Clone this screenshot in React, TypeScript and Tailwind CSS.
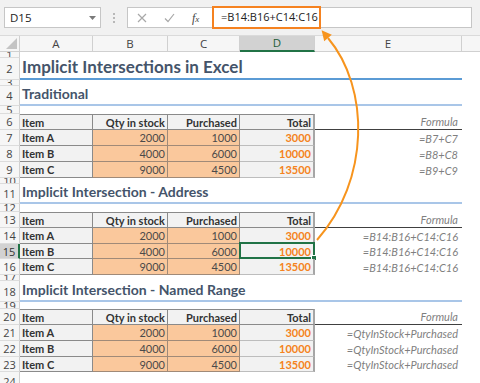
import React from 'react';

const cellFont = "font-['Lato','Liberation_Sans',sans-serif]";
const uiFont = "font-['Open_Sans','Noto_Sans',sans-serif]";

type DataRow = {
  n: number;
  h: string;
  item: string;
  qty: string;
  purchased: string;
  total: string;
  formula: string;
  selected?: boolean;
};

type Section = {
  heading: { n: number; h: string; text: string };
  spacer: { n: number; h: string };
  header: { n: number; h: string };
  rows: DataRow[];
};

const RowHead: React.FC<{ n: number; h: string; active?: boolean }> = ({ n, h, active }) => (
  <div
    className={`${h} w-[20px] shrink-0 flex items-center justify-center overflow-hidden leading-none text-[11px] ${uiFont} border-b border-b-[#dcdcdc] ${
      active
        ? 'border-r-2 border-r-[#217346] bg-[#d2d2d2] text-[#333]'
        : 'border-r border-r-[#d0d0d0] bg-[#f6f6f6] text-[#444]'
    }`}
  >
    {n}
  </div>
);

const Blank: React.FC<{ n: number; h: string }> = ({ n, h }) => (
  <div className="flex">
    <RowHead n={n} h={h} />
    <div className="flex-1" />
  </div>
);

const sections: Section[] = [
  {
    heading: { n: 4, h: 'h-[20px]', text: 'Traditional' },
    spacer: { n: 5, h: 'h-[8px]' },
    header: { n: 6, h: 'h-[16px]' },
    rows: [
      { n: 7, h: 'h-[16px]', item: 'Item A', qty: '2000', purchased: '1000', total: '3000', formula: '=B7+C7' },
      { n: 8, h: 'h-[16px]', item: 'Item B', qty: '4000', purchased: '6000', total: '10000', formula: '=B8+C8' },
      { n: 9, h: 'h-[16px]', item: 'Item C', qty: '9000', purchased: '4500', total: '13500', formula: '=B9+C9' },
    ],
  },
  {
    heading: { n: 11, h: 'h-[20px]', text: 'Implicit Intersection - Address' },
    spacer: { n: 12, h: 'h-[8px]' },
    header: { n: 13, h: 'h-[16px]' },
    rows: [
      { n: 14, h: 'h-[16px]', item: 'Item A', qty: '2000', purchased: '1000', total: '3000', formula: '=B14:B16+C14:C16' },
      { n: 15, h: 'h-[15px]', item: 'Item B', qty: '4000', purchased: '6000', total: '10000', formula: '=B14:B16+C14:C16', selected: true },
      { n: 16, h: 'h-[16px]', item: 'Item C', qty: '9000', purchased: '4500', total: '13500', formula: '=B14:B16+C14:C16' },
    ],
  },
  {
    heading: { n: 18, h: 'h-[21px]', text: 'Implicit Intersection - Named Range' },
    spacer: { n: 19, h: 'h-[7px]' },
    header: { n: 20, h: 'h-[16px]' },
    rows: [
      { n: 21, h: 'h-[16px]', item: 'Item A', qty: '2000', purchased: '1000', total: '3000', formula: '=QtyInStock+Purchased' },
      { n: 22, h: 'h-[16px]', item: 'Item B', qty: '4000', purchased: '6000', total: '10000', formula: '=QtyInStock+Purchased' },
      { n: 23, h: 'h-[15px]', item: 'Item C', qty: '9000', purchased: '4500', total: '13500', formula: '=QtyInStock+Purchased' },
    ],
  },
];

const TableSection: React.FC<{ s: Section }> = ({ s }) => (
  <>
    <div className="flex">
      <RowHead n={s.heading.n} h={s.heading.h} />
      <div
        className={`${s.heading.h} w-[442px] flex items-end pl-[2px] pb-[3px] border-b-2 border-b-[#a9c6e8] text-[14px] font-bold leading-none text-[#44546a] whitespace-nowrap ${cellFont}`}
      >
        {s.heading.text}
      </div>
    </div>
    <Blank n={s.spacer.n} h={s.spacer.h} />
    {/* table header */}
    <div className={`flex text-[11px] leading-none ${cellFont}`}>
      <RowHead n={s.header.n} h={s.header.h} />
      <div className={`${s.header.h} w-[73px] flex items-center pl-[2px] bg-[#f2f2f2] border-t border-b border-r border-[#8a8a8a] font-bold text-[#333]`}>
        Item
      </div>
      <div className={`${s.header.h} w-[75px] flex items-center justify-end pr-[2px] bg-[#f2f2f2] border-t border-b border-r border-[#8a8a8a] font-bold text-[#333]`}>
        Qty in stock
      </div>
      <div className={`${s.header.h} w-[72px] flex items-center justify-end pr-[2px] bg-[#f2f2f2] border-t border-b border-r border-[#8a8a8a] font-bold text-[#333]`}>
        Purchased
      </div>
      <div className={`${s.header.h} w-[75px] flex items-center justify-end pr-[2px] bg-[#f2f2f2] border-t border-b border-r-2 border-[#8a8a8a] border-r-[#a6a6a6] font-bold text-[#333]`}>
        Total
      </div>
      <div className={`${s.header.h} w-[147px] flex items-center justify-end pr-[4px] border-b border-b-[#404040] italic text-[#7f7f7f]`}>
        Formula
      </div>
    </div>
    {s.rows.map((r) => (
      <div key={r.n} className={`flex text-[11px] leading-none ${cellFont}`}>
        <RowHead n={r.n} h={r.h} active={r.selected} />
        <div className={`${r.h} w-[73px] flex items-center pl-[2px] bg-[#f2f2f2] border-b border-r border-[#8a8a8a] font-bold text-[#333]`}>
          {r.item}
        </div>
        <div className={`${r.h} w-[75px] flex items-center justify-end pr-[2px] bg-[#fac89c] border-b border-r border-[#a08a78] text-[#4a4a4a]`}>
          {r.qty}
        </div>
        <div className={`${r.h} w-[72px] flex items-center justify-end pr-[2px] bg-[#fac89c] border-b border-r border-[#a08a78] text-[#4a4a4a]`}>
          {r.purchased}
        </div>
        <div className={`${r.h} relative w-[75px] flex items-center justify-end pr-[2px] bg-[#f2f2f2] border-b border-b-[#bdbdbd] border-r-2 border-r-[#a6a6a6] font-bold text-[#f58220]`}>
          {r.total}
          {r.selected && (
            <>
              <div className="absolute -left-[1px] -top-[2px] -right-[2px] -bottom-[1px] border-2 border-[#217346]" />
              <div className="absolute -right-[4px] -bottom-[3px] w-[6px] h-[6px] bg-[#217346] border border-white" />
            </>
          )}
        </div>
        <div className={`${r.h} w-[147px] flex items-center justify-end pr-[4px] italic text-[#7f7f7f] whitespace-nowrap`}>
          {r.formula}
        </div>
      </div>
    ))}
  </>
);

const cols = [
  { l: 'A', w: 'w-[73px]' },
  { l: 'B', w: 'w-[75px]' },
  { l: 'C', w: 'w-[72px]' },
  { l: 'D', w: 'w-[75px]', active: true },
  { l: 'E', w: 'w-[147px]' },
];

export default function App() {
  return (
    <div className="relative w-[480px] h-[383px] overflow-hidden bg-white">
      {/* Formula bar */}
      <div className={`h-[35px] bg-[#f1f1f1] flex items-start pt-[7px] pl-[4px] ${uiFont}`}>
        <div className="w-[97px] h-[21px] bg-white border border-[#c6c6c6] flex items-center justify-between pl-[5px] pr-[4px] text-[11.5px] text-[#222]">
          <span>D15</span>
          <svg width="7" height="4" viewBox="0 0 7 4">
            <path d="M0 0 L7 0 L3.5 4 Z" fill="#7a7a7a" />
          </svg>
        </div>
        <div className="w-[26px] h-[21px] flex flex-col items-center justify-center gap-[2px]">
          <span className="w-[2px] h-[2px] bg-[#b8b8b8]" />
          <span className="w-[2px] h-[2px] bg-[#b8b8b8]" />
          <span className="w-[2px] h-[2px] bg-[#b8b8b8]" />
        </div>
        <div className="w-[345px] h-[21px] bg-white border border-[#c6c6c6] flex items-center">
          <div className="w-[85px] flex items-center pl-[9px] gap-[17px] shrink-0">
            <svg width="10" height="10" viewBox="0 0 10 10">
              <path d="M1 1 L9 9 M9 1 L1 9" stroke="#a8a8a8" strokeWidth="1.2" />
            </svg>
            <svg width="11" height="10" viewBox="0 0 11 10">
              <path d="M1 5.5 L4 8.5 L10 1" stroke="#a8a8a8" strokeWidth="1.2" fill="none" />
            </svg>
            <span className="font-['Liberation_Serif',serif] italic text-[12px] text-[#444] leading-none">
              f<span className="text-[9px]">x</span>
            </span>
          </div>
          <div className="h-[23px] w-[109px] -ml-[1px] border-2 border-[#f58220] flex items-center pl-[7px] text-[11px] text-[#222] whitespace-nowrap">
            =B14:B16+C14:C16
          </div>
        </div>
      </div>

      {/* Column headers */}
      <div className={`flex h-[17px] bg-[#f6f6f6] border-t border-[#dadada] ${uiFont} text-[11.5px] leading-none`}>
        <div className="w-[20px] h-full border-r border-b border-[#d0d0d0] flex items-end justify-end p-[2px]">
          <svg width="11" height="11" viewBox="0 0 11 11">
            <path d="M11 0 L11 11 L0 11 Z" fill="#c4c4c4" />
          </svg>
        </div>
        {cols.map((c) => (
          <div
            key={c.l}
            className={`${c.w} h-full flex items-center justify-center border-r border-r-[#d0d0d0] ${
              c.active ? 'bg-[#d2d2d2] border-b-2 border-b-[#217346] text-[#1e5c38]' : 'border-b border-b-[#d0d0d0] text-[#444]'
            }`}
          >
            {c.l}
          </div>
        ))}
        <div className="flex-1 h-full border-b border-[#d0d0d0]" />
      </div>

      {/* Sheet rows */}
      <Blank n={1} h="h-[6px]" />
      <div className="flex">
        <RowHead n={2} h="h-[22px]" />
        <div className={`h-[22px] w-[442px] flex items-end pl-[2px] pb-[3px] border-b-2 border-b-[#5b9bd5] text-[17px] font-bold leading-none text-[#44546a] whitespace-nowrap ${cellFont}`}>
          Implicit Intersections in Excel
        </div>
      </div>
      <Blank n={3} h="h-[6px]" />
      <TableSection s={sections[0]} />
      <Blank n={10} h="h-[6px]" />
      <TableSection s={sections[1]} />
      <Blank n={17} h="h-[6px]" />
      <TableSection s={sections[2]} />
      <Blank n={24} h="h-[20px]" />

      {/* annotation arrow */}
      <svg className="absolute left-0 top-0 pointer-events-none" width="480" height="383" viewBox="0 0 480 383">
        <path d="M317 240 C370 180 370 88 328 38" stroke="#f7941d" strokeWidth="2" fill="none" />
        <path d="M321.6 30.3 L331.8 34.8 L324.2 41.2 Z" fill="#f7941d" />
      </svg>
    </div>
  );
}
